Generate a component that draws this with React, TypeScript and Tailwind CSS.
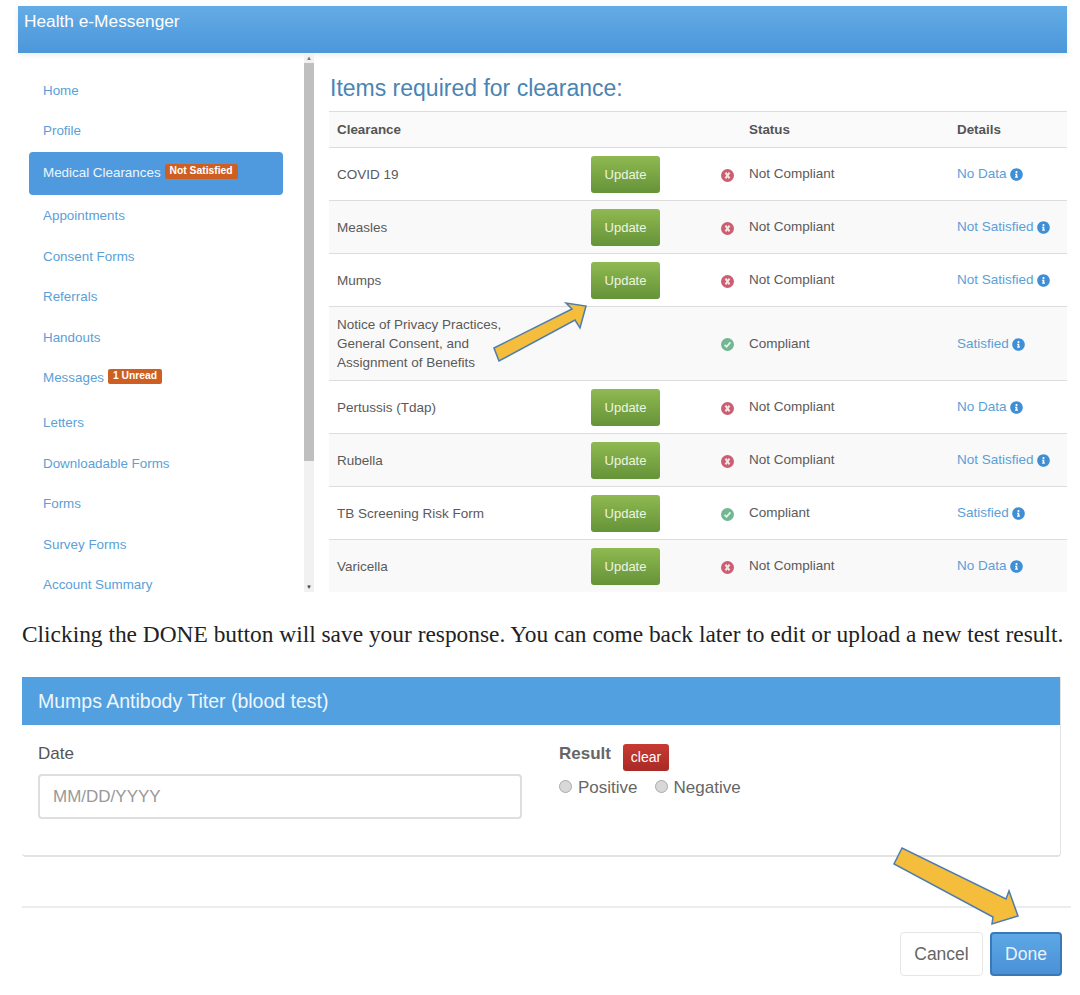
import { FaInfoCircle } from 'react-icons/fa';

const navItems = [
  { label: 'Home', h: 'h-[40.5px]' },
  { label: 'Profile', h: 'h-[40.5px] pb-[1px]' },
  { label: 'Medical Clearances', h: 'h-[43px] pb-[1px]', active: true, badge: 'Not Satisfied' },
  { label: 'Appointments', h: 'h-[42px] pt-[1px]' },
  { label: 'Consent Forms', h: 'h-[40.5px] pb-[1px]' },
  { label: 'Referrals', h: 'h-[40.5px] pb-[1px]' },
  { label: 'Handouts', h: 'h-[40.5px]' },
  { label: 'Messages', h: 'h-[40.5px] pb-[2px]', badge: '1 Unread' },
  { label: 'Letters', h: 'h-[45px] pt-[3px]' },
  { label: 'Downloadable Forms', h: 'h-[40.5px]' },
  { label: 'Forms', h: 'h-[40.5px] pb-[1px]' },
  { label: 'Survey Forms', h: 'h-[40.5px] pb-[1px]' },
  { label: 'Account Summary', h: 'h-[40.5px] pb-[1px]' },
];

const rows = [
  { name: 'COVID 19', ok: false, detail: 'No Data', h: 'h-[53px]' },
  { name: 'Measles', ok: false, detail: 'Not Satisfied', h: 'h-[53px]' },
  { name: 'Mumps', ok: false, detail: 'Not Satisfied', h: 'h-[53px]' },
  { name: 'Notice of Privacy Practices, General Consent, and Assignment of Benefits', ok: true, detail: 'Satisfied', h: 'h-[74px]', noButton: true },
  { name: 'Pertussis (Tdap)', ok: false, detail: 'No Data', h: 'h-[53px]' },
  { name: 'Rubella', ok: false, detail: 'Not Satisfied', h: 'h-[53px]' },
  { name: 'TB Screening Risk Form', ok: true, detail: 'Satisfied', h: 'h-[53px]' },
  { name: 'Varicella', ok: false, detail: 'No Data', h: 'h-[52px]' },
];

function StatusIcon({ ok }: { ok: boolean }) {
  if (ok) {
    return (
      <svg width="13" height="13" viewBox="0 0 13 13">
        <circle cx="6.5" cy="6.5" r="6.5" fill="#72b792" />
        <path d="M3.6 6.8 5.6 8.8 9.4 4.4" fill="none" stroke="#e6f3ea" strokeWidth="1.8" />
      </svg>
    );
  }
  return (
    <svg width="13" height="13" viewBox="0 0 13 13">
      <circle cx="6.5" cy="6.5" r="6.5" fill="#cb5f71" />
      <path d="M4.5 3.6 8.5 9.4M8.5 3.6 4.5 9.4" fill="none" stroke="#f6e3e6" strokeWidth="2" />
    </svg>
  );
}

export default function App() {
  return (
    <div className="relative w-[1080px] h-[995px] overflow-hidden bg-white font-['Liberation_Sans',Arial,sans-serif]">
      <div className="pt-[6px] pl-[18px] w-[1067px]">
        {/* header */}
        <div className="h-[47px] pl-[6px] pt-[4px] bg-gradient-to-b from-[#64ace6] to-[#4c96da] text-white text-[17.3px] leading-[22px] shadow-[0_2px_6px_rgba(0,0,0,0.08)]">
          Health e-Messenger
        </div>

        <div className="flex h-[539px]">
          {/* sidebar */}
          <div className="w-[286px] pl-[11px] pr-[21px] pt-[18px]">
            {navItems.map((item) => (
              <div
                key={item.label}
                className={`${item.h} flex items-center pl-[14px] text-[13.4px] rounded-[4px] ${item.active ? 'bg-[#4f9ade] text-[#eef6fc]' : 'text-[#5b9fd8]'}`}
              >
                {item.label}
                {item.badge && (
                  <span className="ml-[4px] mb-[3px] px-[5px] h-[15px] leading-[14px] rounded-[2px] bg-[#ce5f22] text-white text-[10.3px] font-bold">
                    {item.badge}
                  </span>
                )}
              </div>
            ))}
          </div>

          {/* scrollbar */}
          <div className="w-[10px] bg-[#f1f1f1] flex flex-col items-center">
            <div className="h-[10px] text-[#777] text-[6px] leading-[10px]">▲</div>
            <div className="w-full h-[398px] bg-[#bfbfbf]" />
            <div className="mt-auto h-[10px] text-[#444] text-[6px] leading-[10px]">▼</div>
          </div>

          {/* clearances */}
          <div className="ml-[15px] w-[738px]">
            <div className="h-[58px] pt-[21px] pl-[1px] text-[23px] leading-[28px] text-[#4a84b3]">
              Items required for clearance:
            </div>
            <div className="grid grid-cols-[262px_130px_28px_208px_1fr] h-[37px] pt-[2px] items-center bg-[#fafafa] border-t border-[#dddddd] border-b text-[13.4px] font-bold text-[#555]">
              <div className="pl-[8px]">Clearance</div>
              <div />
              <div />
              <div>Status</div>
              <div>Details</div>
            </div>
            {rows.map((row, i) => (
              <div
                key={row.name}
                className={`grid grid-cols-[262px_130px_28px_208px_1fr] ${row.h} items-center text-[13.5px] text-[#5a5a5a] ${i % 2 === 1 ? 'bg-[#f9f9f9]' : 'bg-white'} ${i < rows.length - 1 ? 'border-b border-[#dddddd]' : ''}`}
              >
                <div className={`pl-[8px] leading-[19px] ${row.noButton ? 'w-[180px]' : ''}`}>{row.name}</div>
                <div>
                  {!row.noButton && (
                    <div className="w-[69px] h-[37px] pt-[1px] flex items-center justify-center rounded-[3px] bg-gradient-to-b from-[#8fb951] to-[#659338] text-[#eef5e2] text-[13px]">
                      Update
                    </div>
                  )}
                </div>
                <div className="pt-[2px]">
                  <StatusIcon ok={row.ok} />
                </div>
                <div className="pt-[1px]">{row.ok ? 'Compliant' : 'Not Compliant'}</div>
                <div className="pt-[1px] flex items-center gap-[3px] text-[#5b9fd8]">
                  {row.detail}
                  <FaInfoCircle className="text-[#3f8fd6]" size={13} />
                </div>
              </div>
            ))}
          </div>
        </div>
      </div>

      <p className="h-[85px] pl-[22px] pt-[29px] text-[23.4px] leading-[26px] text-[#222] whitespace-nowrap font-['Liberation_Serif','Times_New_Roman',serif]">
        Clicking the DONE button will save your response. You can come back later to edit or upload a new test result.
      </p>

      {/* modal */}
      <div className="ml-[22px] w-[1039px] h-[180px] border-b-2 border-r border-[#e3e3e3] rounded-b-[4px]">
        <div className="h-[48px] pl-[16px] pt-[1px] flex items-center bg-[#53a0e0] text-[#eef6fc] text-[19.5px]">
          Mumps Antibody Titer (blood test)
        </div>
        <div className="flex pl-[16px]">
          <div className="w-[484px]">
            <div className="pt-[18px] h-[49px] text-[17px] leading-[22px] text-[#555]">Date</div>
            <div className="h-[45px] pl-[13px] flex items-center border-2 border-[#dedede] rounded-[4px] text-[17px] text-[#999]">
              MM/DD/YYYY
            </div>
          </div>
          <div className="ml-[37px] pt-[18px] text-[17px] text-[#555]">
            <div className="flex items-center h-[22px]">
              <span className="font-bold text-[#666]">Result</span>
              <span className="ml-[12px] mt-[6px] w-[46px] h-[27px] flex items-center justify-center rounded-[3px] bg-gradient-to-b from-[#c83a34] to-[#a92a26] text-white text-[14px]">
                clear
              </span>
            </div>
            <div className="mt-[10px] flex items-center text-[#666]">
              <span className="w-[13px] h-[13px] rounded-full bg-[#d8d8d8] border border-[#aaa] mb-[2px]" />
              <span className="ml-[6px]">Positive</span>
              <span className="ml-[17px] w-[13px] h-[13px] rounded-full bg-[#d8d8d8] border border-[#aaa] mb-[2px]" />
              <span className="ml-[6px]">Negative</span>
            </div>
          </div>
        </div>
      </div>

      {/* footer */}
      <div className="ml-[22px] mt-[49px] w-[1049px] border-t-2 border-[#ececec] pt-[24px] pr-[9px] flex justify-end gap-[7px] text-[17.5px]">
        <div className="w-[83px] h-[44px] flex items-center justify-center rounded-[4px] border border-[#e6e6e6] text-[#666]">Cancel</div>
        <div className="w-[72px] h-[44px] flex items-center justify-center rounded-[4px] border-2 border-[#3a79b8] bg-gradient-to-b from-[#5ea8e6] to-[#4a90d6] text-[#e8f3fb]">Done</div>
      </div>

      {/* annotation arrows */}
      <svg className="absolute left-0 top-0 pointer-events-none" width="1080" height="995">
        <polygon points="494,348 572,309 566,303 586,306 580,328 575,320 499,361" fill="#f4bd3c" stroke="#4d7db0" strokeWidth="1.5" />
        <polygon points="902,848 894,864 993,917 992,924 1018,916 1009,891 1006,899" fill="#f4bd3c" stroke="#4d7db0" strokeWidth="1.5" />
      </svg>
    </div>
  );
}
